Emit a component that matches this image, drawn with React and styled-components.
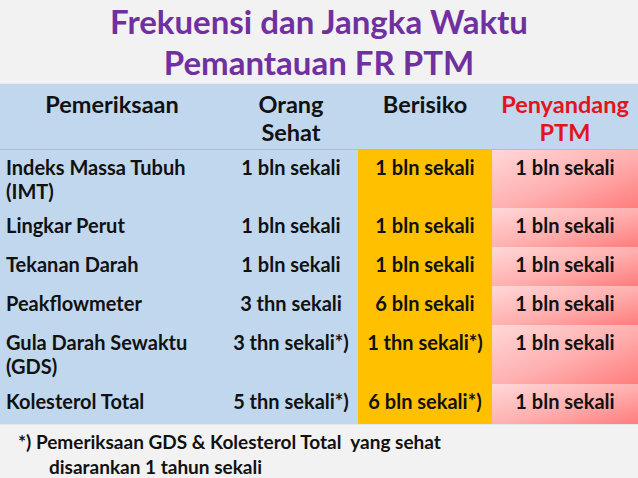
import React from "react";
import styled, { createGlobalStyle } from "styled-components";

const GlobalStyle = createGlobalStyle`
  html, body {
    margin: 0;
    padding: 0;
    background: #f2f2f2;
  }
  body {
    font-family: Lato, "Liberation Sans", sans-serif;
    font-weight: 700;
    color: #111;
  }
`;

const rows = [
  { name: ["Indeks Massa Tubuh", "(IMT)"], sehat: "1 bln sekali", risiko: "1 bln sekali", ptm: "1 bln sekali", h: 58 },
  { name: ["Lingkar Perut"], sehat: "1 bln sekali", risiko: "1 bln sekali", ptm: "1 bln sekali", h: 39 },
  { name: ["Tekanan Darah"], sehat: "1 bln sekali", risiko: "1 bln sekali", ptm: "1 bln sekali", h: 39 },
  { name: ["Peakflowmeter"], sehat: "3 thn sekali", risiko: "6 bln sekali", ptm: "1 bln sekali", h: 39 },
  { name: ["Gula Darah Sewaktu", "(GDS)"], sehat: "3 thn sekali*)", risiko: "1 thn sekali*)", ptm: "1 bln sekali", h: 59 },
  { name: ["Kolesterol Total"], sehat: "5 thn sekali*)", risiko: "6 bln sekali*)", ptm: "1 bln sekali", h: 40 },
];

const Slide = styled.div`
  width: 638px;
  height: 478px;
  overflow: hidden;
  background: #f2f2f2;
`;

const Title = styled.h1`
  margin: 0;
  height: 83px;
  box-sizing: border-box;
  padding-top: 1px;
  text-align: center;
  color: #7030a0;
  font-size: 33px;
  line-height: 41px;
  font-weight: 700;
  white-space: nowrap;
`;

const Table = styled.div`
  display: grid;
  grid-template-columns: 224px 134px 134px 146px;
  border-top: 1px solid #e4ebf3;
  border-bottom: 1px solid #dfe6ee;
`;

const HeadCell = styled.div`
  background: #c0d7ed;
  border-bottom: 1px solid #a9c0d8;
  text-align: center;
  font-size: 23.5px;
  line-height: 28px;
  padding-top: 6px;
  box-sizing: border-box;
  height: 66px;
  white-space: nowrap;
  color: ${(p) => (p.$red ? "#e3141c" : "#111")};
`;

const Cell = styled.div`
  height: ${(p) => p.$h}px;
  box-sizing: border-box;
  padding-top: 5px;
  font-size: 20px;
  line-height: 24px;
  white-space: nowrap;
  text-align: ${(p) => (p.$left ? "left" : "center")};
  padding-left: ${(p) => (p.$left ? "6px" : "0")};
  background: ${(p) =>
    p.$kind === "risk"
      ? "#ffc000"
      : p.$kind === "ptm"
      ? "linear-gradient(to bottom right, #ffd8d8 0%, #ffaeae 55%, #ff7c7c 100%)"
      : "#c0d7ed"};
`;

const Note = styled.div`
  padding: 4px 0 0 18px;
  font-size: 19px;
  line-height: 25px;
  white-space: pre;
`;

const NoteLine = styled.div`
  padding-left: ${(p) => (p.$indent ? "31px" : "0")};
`;

export default function App() {
  return (
    <Slide>
      <GlobalStyle />
      <Title>
        Frekuensi dan Jangka Waktu
        <br />
        Pemantauan FR PTM
      </Title>
      <Table>
        <HeadCell>Pemeriksaan</HeadCell>
        <HeadCell>
          Orang
          <br />
          Sehat
        </HeadCell>
        <HeadCell>Berisiko</HeadCell>
        <HeadCell $red>
          Penyandang
          <br />
          PTM
        </HeadCell>
        {rows.map((r, i) => (
          <React.Fragment key={i}>
            <Cell $left $h={r.h}>
              {r.name.map((n, j) => (
                <div key={j}>{n}</div>
              ))}
            </Cell>
            <Cell $h={r.h}>{r.sehat}</Cell>
            <Cell $h={r.h} $kind="risk">
              {r.risiko}
            </Cell>
            <Cell $h={r.h} $kind="ptm">
              {r.ptm}
            </Cell>
          </React.Fragment>
        ))}
      </Table>
      <Note>
        <NoteLine>*) Pemeriksaan GDS &amp; Kolesterol Total  yang sehat</NoteLine>
        <NoteLine $indent>disarankan 1 tahun sekali</NoteLine>
      </Note>
    </Slide>
  );
}
